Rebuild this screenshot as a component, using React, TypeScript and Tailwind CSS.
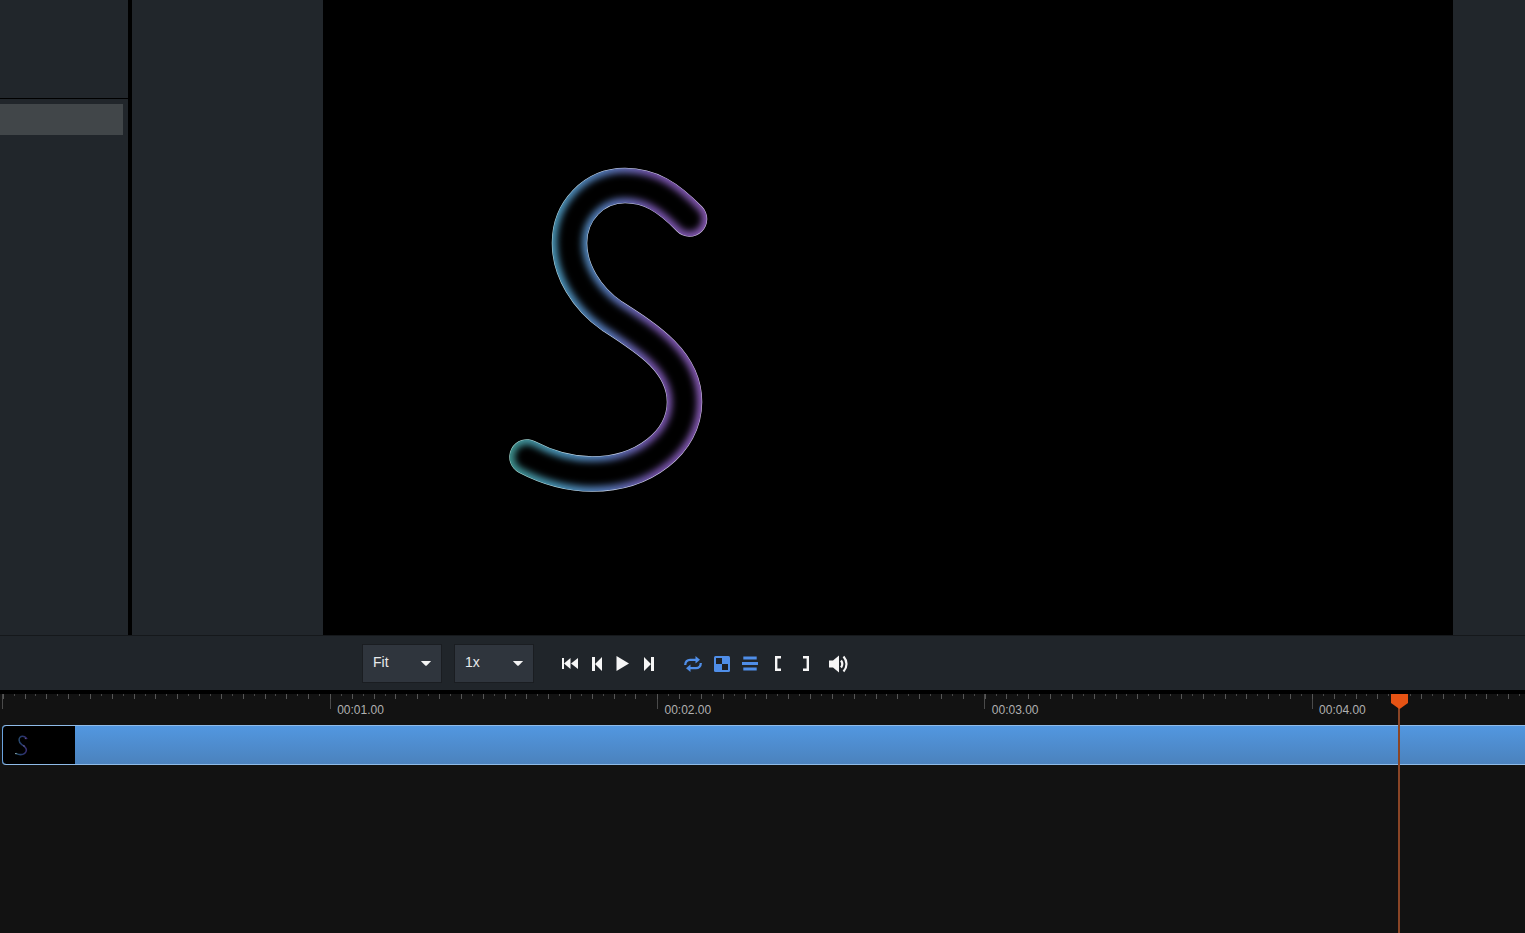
const sPath =
  "M689.5 219 C668 197 650 185.500 625 185.500 C594 185.500 569.500 211 569.500 243 C569.500 270 586 298 612 316 C648 339 684.500 362 684.500 402 C684.500 442 644 474 592 474 C568 474 548 468 527 457";

function SelectBox({ label }: { label: string }) {
  return (
    <div className="flex h-[39px] w-[80px] items-center justify-between border border-[#1a1d21] bg-[#2f353d] pl-[10px] pr-[10px] text-[14px] text-[#e8eaec]">
      <span className="-mt-[1px]">{label}</span>
      <svg viewBox="0 0 10 5" className="mt-[1px] h-[5px] w-[10px]" fill="#f4f4f4">
        <path d="M0.500 0 H9.500 Q10 0 9.700 0.500 L5.500 4.700 Q5 5 4.500 4.700 L0.300 0.500 Q0 0 0.500 0 Z" />
      </svg>
    </div>
  );
}

function Controls() {
  return (
    <div className="mt-[1px] flex items-center text-[#f6f6f6]">
      <svg viewBox="0 0 16 11" className="ml-[28px] h-[11px] w-[16px]" fill="currentColor">
        <path d="M0 0 H2 V11 H0 Z M8.500 0 V11 L2 5.500 Z M16 0 V11 L9 5.500 Z" />
      </svg>
      <svg viewBox="0 0 10 14" className="ml-[14px] h-[14px] w-[10px]" fill="currentColor">
        <path d="M0 0 H3 V14 H0 Z M10 0 V14 L3 7 Z" />
      </svg>
      <svg viewBox="0 0 13 15" className="ml-[14px] h-[15px] w-[13px]" fill="currentColor">
        <path d="M0.500 0 L13 7.500 L0.500 15 Z" />
      </svg>
      <svg viewBox="0 0 10 14" className="ml-[15px] h-[14px] w-[10px]" fill="currentColor">
        <path d="M0 0 L7 7 L0 14 Z M7 0 H10 V14 H7 Z" />
      </svg>
      <svg viewBox="0 0 18 16" className="ml-[30px] h-[16px] w-[18px] text-[#4f8ee8]" fill="none" stroke="currentColor" strokeWidth="2.300">
        <path d="M1.200 9 C1.200 5.500 3.500 3.800 6 3.800 H13" />
        <path d="M16.800 7 C16.800 10.500 14.500 12.200 12 12.200 H5" />
        <path d="M11.500 0 L16 3.800 L11.500 7.500 Z" fill="currentColor" stroke="none" />
        <path d="M6.500 8.500 L2 12.200 L6.500 16 Z" fill="currentColor" stroke="none" />
      </svg>
      <svg viewBox="0 0 16 16" className="ml-[12px] h-[16px] w-[16px]">
        <rect width="16" height="16" rx="1.500" fill="#4f8ee8" />
        <rect x="2" y="2" width="6" height="6" fill="#1d2025" />
        <rect x="8" y="8" width="6" height="6" fill="#1d2025" />
      </svg>
      <svg viewBox="0 0 16 15" className="ml-[12px] h-[15px] w-[16px]" fill="#4f8ee8">
        <rect x="1.300" y="0.500" width="13.400" height="3" />
        <rect x="0" y="6" width="16" height="3" />
        <rect x="1.300" y="11.500" width="13.400" height="3" />
      </svg>
      <svg viewBox="0 0 6 15" className="ml-[17px] h-[15px] w-[6px]" fill="none" stroke="#f6f6f6" strokeWidth="2.400">
        <path d="M6 1.200 H1.200 V13.800 H6" />
      </svg>
      <svg viewBox="0 0 6 15" className="ml-[22px] h-[15px] w-[6px]" fill="none" stroke="#f6f6f6" strokeWidth="2.400">
        <path d="M0 1.200 H4.800 V13.800 H0" />
      </svg>
      <svg viewBox="0 0 19 18" className="ml-[20px] h-[18px] w-[19px]">
        <path d="M0 5.500 H4 L10 0.500 V17.500 L4 12.500 H0 Z" fill="#f6f6f6" />
        <path d="M12 5.500 C13.500 7.500 13.500 10.500 12 12.500" fill="none" stroke="#f6f6f6" strokeWidth="2.200" />
        <path d="M14.500 1.500 C18.500 6 18.500 12 14.500 16.500" fill="none" stroke="#f6f6f6" strokeWidth="2.200" />
      </svg>
    </div>
  );
}

function Ruler() {
  const minor = Array.from({ length: 140 }, (_, i) => 2.7 + i * 10.91);
  return (
    <div className="relative h-[31px] bg-[#121212] text-[12px] text-[#b0b0b0]">
      <svg className="absolute inset-0 h-[31px] w-full" aria-hidden="true">
        {minor.map((x, i) => (
          <rect key={i} x={Math.round(x)} y={0} width={1} height={i % 2 === 0 ? 5 : 2} fill={i % 2 === 0 ? "#565656" : "#484848"} />
        ))}
      </svg>
      <div className="flex pl-[2.4px]">
        {["", "00:01.00", "00:02.00", "00:03.00", "00:04.00"].map((t, i) => (
          <div key={i} className="flex h-[15px] w-[327.3px] shrink-0 items-end">
            <div className="h-full w-px bg-[#4a4a4a]" />
            <span className="relative top-[8px] pl-[6.500px] leading-[14px]">{t}</span>
          </div>
        ))}
      </div>
    </div>
  );
}

export default function App() {
  return (
    <div className="relative h-[933px] w-[1525px] overflow-hidden bg-black font-['Liberation_Sans',sans-serif]">
      <div className="flex h-[635px]">
        <div className="w-[128px] shrink-0 bg-[#21262b]">
          <div className="h-[99px] border-b border-black" />
          <div className="mt-[5px] h-[31px] w-[123px] bg-[#414649]" />
        </div>
        <div className="ml-[4px] w-[191px] shrink-0 bg-[#21262b]" />
        <div className="flex-1 bg-black">
          <svg viewBox="323 0 1130 635" className="h-[635px] w-full">
            <defs>
              <linearGradient id="edge" gradientUnits="userSpaceOnUse" x1="510" y1="0" x2="702" y2="0">
                <stop offset="0" stopColor="#3f9490" />
                <stop offset="0.25" stopColor="#4a94b8" />
                <stop offset="0.5" stopColor="#5578b8" />
                <stop offset="0.75" stopColor="#7654ac" />
                <stop offset="1" stopColor="#8458b0" />
              </linearGradient>
              <linearGradient id="rim" gradientUnits="userSpaceOnUse" x1="510" y1="0" x2="702" y2="0">
                <stop offset="0" stopColor="#b5e8e0" />
                <stop offset="0.4" stopColor="#d8ecff" />
                <stop offset="1" stopColor="#e2d2f6" />
              </linearGradient>
              <filter id="soft" filterUnits="userSpaceOnUse" x="480" y="140" width="260" height="380">
                <feGaussianBlur stdDeviation="3.500" />
              </filter>
            </defs>
            <path d={sPath} fill="none" stroke="url(#rim)" strokeWidth="35.500" strokeLinecap="round" />
            <path d={sPath} fill="none" stroke="url(#edge)" strokeWidth="34.500" strokeLinecap="round" />
            <path d={sPath} fill="none" stroke="#000" strokeWidth="25" strokeLinecap="round" filter="url(#soft)" />
          </svg>
        </div>
        <div className="w-[72px] shrink-0 bg-[#21262b]" />
      </div>

      <div className="flex h-[55px] items-center border-t border-[#15181b] bg-[#20252a] pl-[362px]">
        <SelectBox label="Fit" />
        <div className="ml-[12px]">
          <SelectBox label="1x" />
        </div>
        <Controls />
      </div>

      <div className="h-[4px] bg-black" />
      <Ruler />

      <div className="h-[208px] bg-[#121212]">
        <div className="ml-[2px] flex h-[40px] overflow-hidden rounded-l-[4px] border border-x-0 border-[#8fbbe8] bg-[linear-gradient(#5297e0,#4b82bd)]">
          <div className="flex w-[73px] shrink-0 items-center rounded-l-[4px] border-l border-[#6ba3de] bg-black pl-[12px]">
            <svg viewBox="505 165 205 330" className="h-[21px] w-[13px]">
              <defs>
                <linearGradient id="thumb" gradientUnits="userSpaceOnUse" x1="510" y1="0" x2="702" y2="0">
                  <stop offset="0" stopColor="#2a5a68" />
                  <stop offset="0.5" stopColor="#263c70" />
                  <stop offset="1" stopColor="#3a2a70" />
                </linearGradient>
              </defs>
              <path d={sPath} fill="none" stroke="url(#thumb)" strokeWidth="24" strokeLinecap="round" />
              <rect x="510" y="450" width="16" height="16" fill="#cfe8ee" />
              <rect x="660" y="215" width="14" height="14" fill="#8f80c8" />
              <rect x="640" y="330" width="14" height="14" fill="#b8b0e0" />
            </svg>
          </div>
        </div>
      </div>

      <div className="absolute left-[1398px] top-[694px] h-[239px] w-[2px] bg-[#8a4526]" />
      <svg viewBox="0 0 17 15" className="absolute left-[1391px] top-[694px] h-[15px] w-[17px]">
        <path d="M0 0 H17 V9 L9 14.700 Q8.500 15 8 14.700 L0 9 Z" fill="#e65314" />
      </svg>
    </div>
  );
}
